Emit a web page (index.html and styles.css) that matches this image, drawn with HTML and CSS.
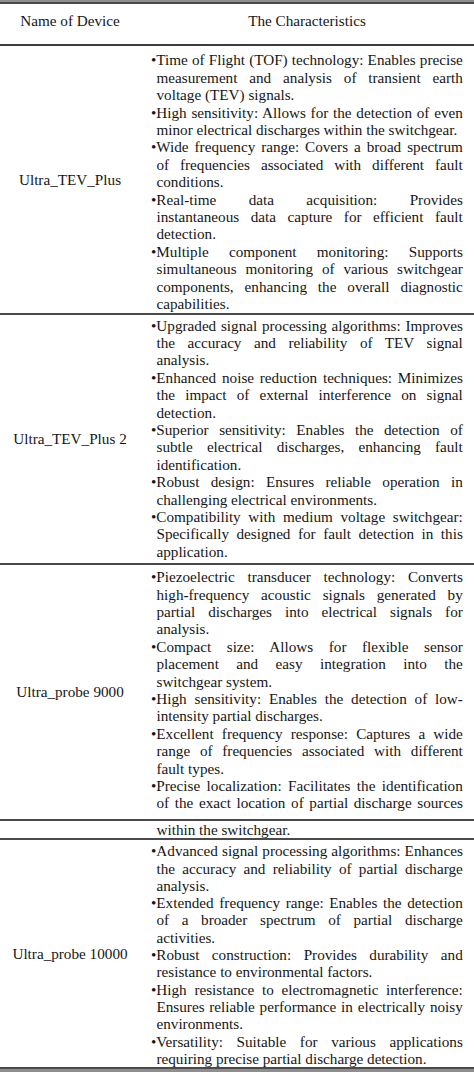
FILE: index.html
```html
<!DOCTYPE html>
<html lang="en">
<head>
<meta charset="utf-8">
<title>Device characteristics</title>
<link rel="stylesheet" href="styles.css">
</head>
<body>
<div class="band band-top"></div>
<table class="spec">
  <colgroup><col class="c-name"><col class="c-desc"></colgroup>
  <thead>
    <tr><th class="h-name">Name of Device</th><th class="h-desc">The Characteristics</th></tr>
  </thead>
  <tbody>
    <tr class="first">
      <td class="name">Ultra_TEV_Plus</td>
      <td class="desc">
        <p class="item">Time of Flight (TOF) technology: Enables precise measurement and analysis of transient earth voltage (TEV) signals.</p>
        <p class="item">High sensitivity: Allows for the detection of even minor electrical discharges within the switchgear.</p>
        <p class="item">Wide frequency range: Covers a broad spectrum of frequencies associated with different fault conditions.</p>
        <p class="item">Real-time data acquisition: Provides instantaneous data capture for efficient fault detection.</p>
        <p class="item">Multiple component monitoring: Supports simultaneous monitoring of various switchgear components, enhancing the overall diagnostic capabilities.</p>
      </td>
    </tr>
    <tr class="second">
      <td class="name">Ultra_TEV_Plus 2</td>
      <td class="desc">
        <p class="item">Upgraded signal processing algorithms: Improves the accuracy and reliability of TEV signal analysis.</p>
        <p class="item">Enhanced noise reduction techniques: Minimizes the impact of external interference on signal detection.</p>
        <p class="item">Superior sensitivity: Enables the detection of subtle electrical discharges, enhancing fault identification.</p>
        <p class="item">Robust design: Ensures reliable operation in challenging electrical environments.</p>
        <p class="item">Compatibility with medium voltage switchgear: Specifically designed for fault detection in this application.</p>
      </td>
    </tr>
    <tr class="third">
      <td class="name">Ultra_probe 9000</td>
      <td class="desc">
        <p class="item">Piezoelectric transducer technology: Converts high-frequency acoustic signals generated by partial discharges into electrical signals for analysis.</p>
        <p class="item">Compact size: Allows for flexible sensor placement and easy integration into the switchgear system.</p>
        <p class="item">High sensitivity: Enables the detection of low-intensity partial discharges.</p>
        <p class="item">Excellent frequency response: Captures a wide range of frequencies associated with different fault types.</p>
        <p class="item cont">Precise localization: Facilitates the identification of the exact location of partial discharge sources</p>
      </td>
    </tr>
    <tr class="split">
      <td class="name"></td>
      <td class="desc"><p class="tail">within the switchgear.</p></td>
    </tr>
    <tr class="last">
      <td class="name">Ultra_probe 10000</td>
      <td class="desc">
        <p class="item">Advanced signal processing algorithms: Enhances the accuracy and reliability of partial discharge analysis.</p>
        <p class="item">Extended frequency range: Enables the detection of a broader spectrum of partial discharge activities.</p>
        <p class="item">Robust construction: Provides durability and resistance to environmental factors.</p>
        <p class="item">High resistance to electromagnetic interference: Ensures reliable performance in electrically noisy environments.</p>
        <p class="item">Versatility: Suitable for various applications requiring precise partial discharge detection.</p>
      </td>
    </tr>
  </tbody>
</table>
<div class="band band-bottom"></div>
</body>
</html>
```
FILE: styles.css
```css
html, body {
  margin: 0;
  padding: 0;
  background: #ffffff;
}
body {
  width: 474px;
  font-family: "Liberation Serif", "Times New Roman", serif;
  font-size: 15.2px;
  line-height: 17.4px;
  color: #161616;
}
.band {
  height: 4px;
}
.band-top {
  background: linear-gradient(#8e8e8e 0, #8e8e8e 2px, #4a4a4a 2px, #4a4a4a 4px);
}
.band-bottom {
  height: 6px;
  background: linear-gradient(#4a4a4a 0, #4a4a4a 2px, #8e8e8e 2px, #8e8e8e 6px);
}
.spec {
  width: 474px;
  border-collapse: collapse;
  table-layout: fixed;
}
.c-name { width: 140px; }
.c-desc { width: 334px; }
th {
  font-weight: normal;
  padding: 8px 0 15px 0;
  vertical-align: top;
  text-align: center;
  border-bottom: 2px solid #3c3c3c;
}
.h-desc { padding-left: 11px; padding-right: 11px; }
td {
  border-bottom: 2px solid #4a4a4a;
  padding: 0;
}
.last td { border-bottom: 0; }
.name {
  text-align: center;
  vertical-align: middle;
}
.desc {
  padding: 2px 11.2px 0 11px;
  vertical-align: top;
}
.first .desc { padding-top: 5px; }
.second .desc { padding-bottom: 3px; }
.third .desc { padding-top: 3px; padding-bottom: 7px; }
.last .desc { padding-top: 2px; line-height: 17.3px; }
.item {
  margin: 0;
  padding-left: 0.36em;
  text-indent: -0.36em;
  text-align: justify;
}
.item::before {
  content: "\2022";
}
.cont { text-align-last: justify; }
.tail {
  margin: 0;
  padding-left: 0.36em;
}
.split .desc { padding-top: 0; }
```
